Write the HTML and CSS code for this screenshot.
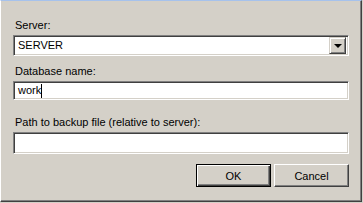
FILE: index.html
```html
<!DOCTYPE html>
<html lang="en">

<head>
    <meta charset="UTF-8">
    <title>Backup</title>
    <link rel="stylesheet" href="styles.css">
</head>

<body>
    <div class="dialog">
        <div class="form-item first">
            <label>Server:</label>
            <div class="field combo">
                <span class="value">SERVER</span>
                <span class="drop-btn"><i class="arrow"></i></span>
            </div>
        </div>
        <div class="form-item">
            <label>Database name:</label>
            <div class="field db"><span class="value">work</span><span class="caret"></span></div>
        </div>
        <div class="form-item">
            <label>Path to backup file (relative to server):</label>
            <div class="field path"></div>
        </div>
        <div class="buttons">
            <button class="btn default">OK</button>
            <button class="btn">Cancel</button>
        </div>
    </div>
</body>

</html>
```

FILE: styles.css
```css
* {
    margin: 0;
    padding: 0;
    box-sizing: border-box;
}

body {
    background-color: #d4d0c8;
    font-family: "Liberation Sans", Arial, sans-serif;
    font-size: 11px;
    color: #000;
}

.dialog {
    width: 362px;
    height: 202px;
    padding: 18px 12px 0 12px;
    background-color: #d4d0c8;
    border-top: 1px solid #a6c2ec;
    border-left: 1px solid #fff;
    border-right: 1px solid #404040;
    border-bottom: 1px solid #404040;
    box-shadow: inset -1px -1px #808080;
}

.form-item {
    margin-top: 9px;
}

.form-item.first {
    margin-top: 0;
}

.form-item label {
    display: block;
    line-height: 13px;
    margin-bottom: 3px;
    padding-left: 2px;
}

/* sunken 3d field */
.field {
    display: flex;
    align-items: center;
    background-color: #fff;
    border: 1px solid;
    border-color: #808080 #fff #fff #808080;
    box-shadow: inset 1px 1px #404040, inset -1px -1px #d4d0c8;
    padding: 0 3px 0 4px;
}

.field .value {
    line-height: 13px;
}

.combo {
    height: 21px;
    padding-right: 2px;
}

.combo .value {
    flex: 1;
}

.drop-btn {
    display: flex;
    align-items: center;
    justify-content: center;
    width: 17px;
    height: 17px;
    background-color: #d4d0c8;
    border: 1px solid;
    border-color: #d4d0c8 #404040 #404040 #d4d0c8;
    box-shadow: inset 1px 1px #fff, inset -1px -1px #808080;
}

.drop-btn .arrow {
    width: 0;
    height: 0;
    border-left: 4px solid transparent;
    border-right: 4px solid transparent;
    border-top: 4px solid #000;
    margin-top: 1px;
}

.db {
    height: 19px;
    margin-bottom: 16px;
}

.caret {
    width: 1px;
    height: 14px;
    background-color: #000;
}

.path {
    height: 22px;
}

.buttons {
    display: flex;
    justify-content: flex-end;
    gap: 3px;
    margin-top: 10px;
}

.btn {
    width: 75px;
    height: 23px;
    font-family: inherit;
    font-size: 11px;
    color: #000;
    background-color: #d4d0c8;
    border: 1px solid;
    border-color: #fff #404040 #404040 #fff;
    box-shadow: inset -1px -1px #808080;
}

.btn.default {
    border: 1px solid #000;
    box-shadow: inset 1px 1px #fff, inset -1px -1px #404040, inset -2px -2px #808080;
}
```
